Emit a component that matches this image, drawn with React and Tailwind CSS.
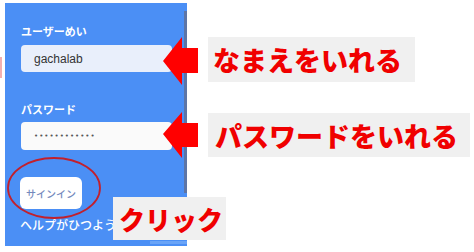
export default function App() {
  const jp = { fontFamily: '"Noto Sans CJK JP", "Noto Sans", sans-serif' };
  return (
    <div className="relative w-[474px] h-[252px] bg-white overflow-hidden" style={jp}>
      <div className="absolute left-0 top-[57px] w-[2px] h-[21px] bg-[#f3b0b0]" />
      <div className="ml-[5px] pt-[3px]">
        <div className="relative w-[182px] h-[243px] bg-[#4b8ff5] pl-[16px] pt-[21px] flex flex-col">
          <div className="absolute right-0 top-[8px] w-[3px] h-[182px] bg-[#5d75a6]" />
          <div className="absolute right-0 bottom-[2px] w-[37px] h-[3px] bg-[#6aa4f7]" />
          <div className="text-[11px] leading-[14px] font-bold text-white">ユーザーめい</div>
          <div className="mt-[7px] w-[151px] h-[27px] rounded-[4px] bg-[#e9effb] flex items-center pl-[13px] text-[12px] text-[#333]" style={{ fontFamily: '"Liberation Sans", Arial, sans-serif' }}>
            gachalab
          </div>
          <div className="mt-[30px] text-[11px] leading-[14px] font-bold text-white">パスワード</div>
          <div className="mt-[6px] w-[151px] h-[28px] rounded-[4px] bg-[#fafafa] flex items-center pl-[13px] text-[7px] tracking-[1px] text-[#555]" style={{ fontFamily: '"DejaVu Sans", sans-serif' }}>
            ••••••••••••
          </div>
          <div className="mt-[27px] -ml-[1px] w-[62px] h-[32px] rounded-[6px] bg-white flex items-center justify-center text-[10px] font-medium text-[#7489bd]">
            サインイン
          </div>
          <div className="mt-[9px] -ml-[1px] text-[12px] leading-[14px] font-medium text-white whitespace-nowrap">ヘルプがひつようです</div>
        </div>
      </div>

      <svg className="absolute inset-0 pointer-events-none" width="474" height="252" viewBox="0 0 474 252">
        <polygon points="163,61 182,37 182,48 198,48 198,73 182,73 182,85" fill="#ff0000" />
        <polygon points="163,134 182,112 182,123 198,123 198,147 182,147 182,158" fill="#ff0000" />
        <ellipse cx="54" cy="188" rx="46" ry="30" fill="none" stroke="#c2202c" strokeWidth="1.8" />
      </svg>

      <div className="absolute left-[208px] top-[37px] w-[207px] h-[45px] bg-[#f0f0f0] flex items-center pl-[5px] text-[27px] font-black text-[#f00000] leading-none whitespace-nowrap">
        なまえをいれる
      </div>
      <div className="absolute left-[208px] top-[113px] w-[262px] h-[44px] bg-[#f0f0f0] flex items-center pl-[7px] text-[27px] font-black text-[#f00000] leading-none whitespace-nowrap">
        パスワードをいれる
      </div>
      <div className="absolute left-[113px] top-[197px] w-[113px] h-[43px] bg-[#f0f0f0] flex items-center pl-[6px] text-[26px] font-black text-[#f00000] leading-none whitespace-nowrap">
        クリック
      </div>
    </div>
  );
}
